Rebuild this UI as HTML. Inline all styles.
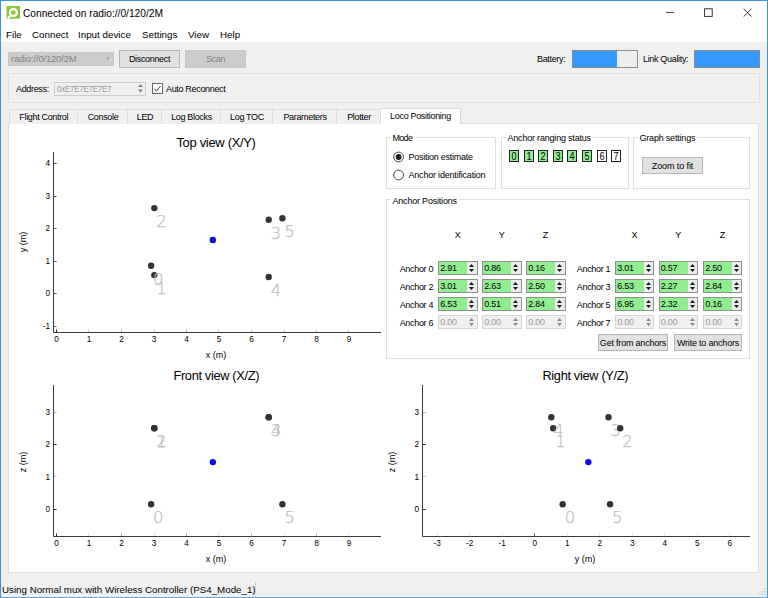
<!DOCTYPE html><html><head><meta charset="utf-8"><title>Connected on radio://0/120/2M</title><style>
*{box-sizing:border-box;margin:0;padding:0}
html,body{width:768px;height:598px;overflow:hidden;background:#f0f0f0}
body{position:relative;font-family:"Liberation Sans","DejaVu Sans",sans-serif;font-size:9px;letter-spacing:-0.33px;color:#000}
.a{position:absolute;white-space:nowrap}
.t{position:absolute;white-space:nowrap;line-height:14px;height:14px;font-size:9px;letter-spacing:-0.33px}
.seg{font-size:9.8px;letter-spacing:0;line-height:16px;height:16px}
.btn{position:absolute;border:1px solid #b6b6b6;background:#e1e1e1;text-align:center;font-size:9px;letter-spacing:-0.33px;line-height:16px;white-space:nowrap}
.dis{color:#838383}
.gb{position:absolute;border:1px solid #dfdfdf}
.gbt{position:absolute;background:#fff;padding:0 2px;line-height:14px;font-size:9px;letter-spacing:-0.2px;white-space:nowrap}
.tab{position:absolute;top:109px;height:15px;border:1px solid #dcdcdc;border-bottom:none;background:#f0f0f0;text-align:center;font-size:9px;letter-spacing:-0.33px;line-height:14px;white-space:nowrap}
.sp{position:absolute;height:14px;border:1px solid #8e8e8e;background:#ececec;font-size:9px;letter-spacing:-0.2px;line-height:13.2px;white-space:nowrap}
.sp i{position:absolute;left:0;top:0;bottom:0;width:28px;background:#90ee90;font-style:normal;padding-left:1.2px}
.sp.d{border-color:#d6d6d6;background:#f0f0f0;color:#9d9d9d}
.sp.d i{background:#f0f0f0}
.sp svg{position:absolute;left:30.2px;top:2.4px}
svg text{letter-spacing:0}
.st{position:absolute;top:150.4px;width:10px;height:11.8px;border:0.9px solid #222;background:#90ee90;font-size:10.2px;line-height:11px;text-align:center;letter-spacing:0}
.st b{display:block;font-weight:normal;transform:scaleX(0.9)}
</style></head><body>
<div class="a" style="left:0;top:0;width:768px;height:42px;background:#fff"></div>
<svg class="a" style="left:6px;top:6px" width="14" height="13" viewBox="0 0 14 13"><rect x="0.5" y="0" width="13.5" height="12.8" rx="0.8" fill="#8cc63f"/><circle cx="7.4" cy="6.5" r="3.5" fill="none" stroke="#fff" stroke-width="2.3"/><path d="M4.9 9.3 L1.9 12.3" stroke="#fff" stroke-width="2.1" stroke-linecap="butt"/></svg>
<div class="t seg" style="left:23px;top:5.7px;font-size:10.2px">Connected on radio://0/120/2M</div>
<svg class="a" style="left:640px;top:0" width="128" height="24" viewBox="0 0 128 24"><path d="M26 12.4h8" stroke="#222" stroke-width="0.9" fill="none"/><rect x="64.6" y="8.8" width="7.6" height="7.6" fill="none" stroke="#222" stroke-width="0.9"/><path d="M103.7 8.8l7.8 7.7M111.5 8.8l-7.8 7.7" stroke="#222" stroke-width="0.9" fill="none"/></svg>
<div class="t seg" style="left:6px;top:26.7px">File</div>
<div class="t seg" style="left:32px;top:26.7px">Connect</div>
<div class="t seg" style="left:78px;top:26.7px">Input device</div>
<div class="t seg" style="left:142px;top:26.7px">Settings</div>
<div class="t seg" style="left:188px;top:26.7px">View</div>
<div class="t seg" style="left:220px;top:26.7px">Help</div>
<div class="a" style="left:8px;top:51.5px;width:106px;height:14.5px;border:1px solid #c8c8c8;background:#cccccc"></div>
<div class="t dis" style="left:11px;top:52px;font-size:9.4px;letter-spacing:-0.15px">radio://0/120/2M</div>
<svg class="a" style="left:105px;top:57px" width="7" height="5" viewBox="0 0 7 5"><path d="M1.6 1.2L4.1 4.2L6.6 1.2Z" fill="#f4f4f4"/><path d="M0.8 0.4L3.4 3.4L6 0.4Z" fill="#a6a6a6"/></svg>
<div class="btn" style="left:119px;top:50px;width:61px;height:18px;line-height:16px">Disconnect</div>
<div class="btn dis" style="left:185px;top:50px;width:61px;height:18px;line-height:16px;background:#cccccc;border-color:#c8c8c8">Scan</div>
<div class="t" style="left:537px;top:52px">Battery:</div>
<div class="a" style="left:572px;top:50px;width:66px;height:18px;border:1px solid #8c8c8c;background:#eeeeee"><div style="width:44px;height:16px;background:#3399ff"></div></div>
<div class="t" style="left:643px;top:52px">Link Quality:</div>
<div class="a" style="left:694px;top:50px;width:66px;height:18px;border:1px solid #8c8c8c;background:#3399ff"></div>
<div class="gb" style="left:8px;top:73px;width:752px;height:30px;border-color:#dedede"></div>
<div class="t" style="left:16px;top:82px">Address:</div>
<div class="a" style="left:54px;top:81.5px;width:92px;height:14px;border:1px solid #cccccc;background:#f0f0f0"></div>
<div class="t" style="left:57px;top:82px;color:#9a9a9a;font-size:9.3px;letter-spacing:-0.3px;transform:scaleX(0.86);transform-origin:0 0">0xE7E7E7E7E7</div>
<svg class="a" style="left:138.2px;top:83.7px" width="5" height="9" viewBox="0 0 5 9"><path d="M0 3L2.5 0L5 3Z M0 5.6L2.5 8.6L5 5.6Z" fill="#808080"/></svg>
<div class="a" style="left:152px;top:82.5px;width:11px;height:11.5px;border:1px solid #666;background:#fff"></div>
<svg class="a" style="left:152px;top:82.5px" width="11" height="11.5" viewBox="0 0 11 11.5"><path d="M2.4 5.8L4.4 8L8.6 3" fill="none" stroke="#222" stroke-width="0.9"/></svg>
<div class="t" style="left:166px;top:82px">Auto Reconnect</div>
<div class="a" style="left:8px;top:123px;width:751px;height:450px;border:1px solid #dddddd;background:#fff"></div>
<div class="tab" style="left:8.5px;width:70.5px">Flight Control</div>
<div class="tab" style="left:77px;width:52px">Console</div>
<div class="tab" style="left:127px;width:36px">LED</div>
<div class="tab" style="left:161px;width:61px">Log Blocks</div>
<div class="tab" style="left:220px;width:54px">Log TOC</div>
<div class="tab" style="left:272px;width:66px">Parameters</div>
<div class="tab" style="left:336px;width:46px">Plotter</div>
<div class="tab" style="left:380px;width:81px;top:108px;height:16px;background:#fff;line-height:15px">Loco Positioning</div>
<div class="gb" style="left:386px;top:137px;width:110px;height:52px"></div>
<div class="gbt" style="left:390.5px;top:130.5px;letter-spacing:-0.7px">Mode</div>
<div class="gb" style="left:501px;top:137px;width:128px;height:52px"></div>
<div class="gbt" style="left:505.5px;top:130.5px;letter-spacing:-0.2px">Anchor ranging status</div>
<div class="gb" style="left:633px;top:137px;width:117px;height:52px"></div>
<div class="gbt" style="left:637.5px;top:130.5px;letter-spacing:-0.2px">Graph settings</div>
<div class="gb" style="left:386px;top:199px;width:364px;height:160px"></div>
<div class="gbt" style="left:390.5px;top:193.5px;letter-spacing:-0.2px">Anchor Positions</div>
<svg class="a" style="left:392px;top:150px" width="14" height="32" viewBox="0 0 14 32"><circle cx="6.6" cy="7" r="4.9" fill="#fff" stroke="#333" stroke-width="0.9"/><circle cx="6.6" cy="7" r="2.9" fill="#222"/><circle cx="6.6" cy="25" r="4.9" fill="#fff" stroke="#333" stroke-width="0.9"/></svg>
<div class="t" style="left:408.5px;top:150px;letter-spacing:-0.25px">Position estimate</div>
<div class="t" style="left:408.5px;top:168px;letter-spacing:-0.2px">Anchor identification</div>
<div class="st" style="left:509.0px;background:#90ee90"><b>0</b></div>
<div class="st" style="left:523.6px;background:#90ee90"><b>1</b></div>
<div class="st" style="left:538.2px;background:#90ee90"><b>2</b></div>
<div class="st" style="left:552.8px;background:#90ee90"><b>3</b></div>
<div class="st" style="left:567.4px;background:#90ee90"><b>4</b></div>
<div class="st" style="left:582.0px;background:#90ee90"><b>5</b></div>
<div class="st" style="left:596.6px;background:#fff"><b>6</b></div>
<div class="st" style="left:611.2px;background:#fff"><b>7</b></div>
<div class="btn" style="left:642px;top:157px;width:61px;height:17px;line-height:16.3px;letter-spacing:-0.1px">Zoom to fit</div>
<div class="t" style="left:447.7px;top:228px;width:20px;text-align:center">X</div>
<div class="t" style="left:491.6px;top:228px;width:20px;text-align:center">Y</div>
<div class="t" style="left:535.3px;top:228px;width:20px;text-align:center">Z</div>
<div class="t" style="left:624.3px;top:228px;width:20px;text-align:center">X</div>
<div class="t" style="left:668.0px;top:228px;width:20px;text-align:center">Y</div>
<div class="t" style="left:712.4px;top:228px;width:20px;text-align:center">Z</div>
<div class="t" style="left:399.7px;top:261.7px">Anchor 0</div>
<div class="t" style="left:576.8px;top:261.7px">Anchor 1</div>
<div class="sp" style="left:438px;top:261px;width:40px"><i>2.91</i><svg width="5" height="8" viewBox="0 0 5 8"><path d="M0 3L2.5 0L5 3Z M0 5L2.5 8L5 5Z" fill="#1a1a1a"/></svg></div>
<div class="sp" style="left:482px;top:261px;width:40px"><i>0.86</i><svg width="5" height="8" viewBox="0 0 5 8"><path d="M0 3L2.5 0L5 3Z M0 5L2.5 8L5 5Z" fill="#1a1a1a"/></svg></div>
<div class="sp" style="left:526px;top:261px;width:40px"><i>0.16</i><svg width="5" height="8" viewBox="0 0 5 8"><path d="M0 3L2.5 0L5 3Z M0 5L2.5 8L5 5Z" fill="#1a1a1a"/></svg></div>
<div class="sp" style="left:615px;top:261px;width:39px"><i>3.01</i><svg width="5" height="8" viewBox="0 0 5 8"><path d="M0 3L2.5 0L5 3Z M0 5L2.5 8L5 5Z" fill="#1a1a1a"/></svg></div>
<div class="sp" style="left:658.5px;top:261px;width:39.5px"><i>0.57</i><svg width="5" height="8" viewBox="0 0 5 8"><path d="M0 3L2.5 0L5 3Z M0 5L2.5 8L5 5Z" fill="#1a1a1a"/></svg></div>
<div class="sp" style="left:703px;top:261px;width:39px"><i>2.50</i><svg width="5" height="8" viewBox="0 0 5 8"><path d="M0 3L2.5 0L5 3Z M0 5L2.5 8L5 5Z" fill="#1a1a1a"/></svg></div>
<div class="t" style="left:399.7px;top:279.7px">Anchor 2</div>
<div class="t" style="left:576.8px;top:279.7px">Anchor 3</div>
<div class="sp" style="left:438px;top:279px;width:40px"><i>3.01</i><svg width="5" height="8" viewBox="0 0 5 8"><path d="M0 3L2.5 0L5 3Z M0 5L2.5 8L5 5Z" fill="#1a1a1a"/></svg></div>
<div class="sp" style="left:482px;top:279px;width:40px"><i>2.63</i><svg width="5" height="8" viewBox="0 0 5 8"><path d="M0 3L2.5 0L5 3Z M0 5L2.5 8L5 5Z" fill="#1a1a1a"/></svg></div>
<div class="sp" style="left:526px;top:279px;width:40px"><i>2.50</i><svg width="5" height="8" viewBox="0 0 5 8"><path d="M0 3L2.5 0L5 3Z M0 5L2.5 8L5 5Z" fill="#1a1a1a"/></svg></div>
<div class="sp" style="left:615px;top:279px;width:39px"><i>6.53</i><svg width="5" height="8" viewBox="0 0 5 8"><path d="M0 3L2.5 0L5 3Z M0 5L2.5 8L5 5Z" fill="#1a1a1a"/></svg></div>
<div class="sp" style="left:658.5px;top:279px;width:39.5px"><i>2.27</i><svg width="5" height="8" viewBox="0 0 5 8"><path d="M0 3L2.5 0L5 3Z M0 5L2.5 8L5 5Z" fill="#1a1a1a"/></svg></div>
<div class="sp" style="left:703px;top:279px;width:39px"><i>2.84</i><svg width="5" height="8" viewBox="0 0 5 8"><path d="M0 3L2.5 0L5 3Z M0 5L2.5 8L5 5Z" fill="#1a1a1a"/></svg></div>
<div class="t" style="left:399.7px;top:297.7px">Anchor 4</div>
<div class="t" style="left:576.8px;top:297.7px">Anchor 5</div>
<div class="sp" style="left:438px;top:297px;width:40px"><i>6.53</i><svg width="5" height="8" viewBox="0 0 5 8"><path d="M0 3L2.5 0L5 3Z M0 5L2.5 8L5 5Z" fill="#1a1a1a"/></svg></div>
<div class="sp" style="left:482px;top:297px;width:40px"><i>0.51</i><svg width="5" height="8" viewBox="0 0 5 8"><path d="M0 3L2.5 0L5 3Z M0 5L2.5 8L5 5Z" fill="#1a1a1a"/></svg></div>
<div class="sp" style="left:526px;top:297px;width:40px"><i>2.84</i><svg width="5" height="8" viewBox="0 0 5 8"><path d="M0 3L2.5 0L5 3Z M0 5L2.5 8L5 5Z" fill="#1a1a1a"/></svg></div>
<div class="sp" style="left:615px;top:297px;width:39px"><i>6.95</i><svg width="5" height="8" viewBox="0 0 5 8"><path d="M0 3L2.5 0L5 3Z M0 5L2.5 8L5 5Z" fill="#1a1a1a"/></svg></div>
<div class="sp" style="left:658.5px;top:297px;width:39.5px"><i>2.32</i><svg width="5" height="8" viewBox="0 0 5 8"><path d="M0 3L2.5 0L5 3Z M0 5L2.5 8L5 5Z" fill="#1a1a1a"/></svg></div>
<div class="sp" style="left:703px;top:297px;width:39px"><i>0.16</i><svg width="5" height="8" viewBox="0 0 5 8"><path d="M0 3L2.5 0L5 3Z M0 5L2.5 8L5 5Z" fill="#1a1a1a"/></svg></div>
<div class="t" style="left:399.7px;top:315.7px">Anchor 6</div>
<div class="t" style="left:576.8px;top:315.7px">Anchor 7</div>
<div class="sp d" style="left:438px;top:315px;width:40px"><i>0.00</i><svg width="5" height="8" viewBox="0 0 5 8"><path d="M0 3L2.5 0L5 3Z M0 5L2.5 8L5 5Z" fill="#8c8c8c"/></svg></div>
<div class="sp d" style="left:482px;top:315px;width:40px"><i>0.00</i><svg width="5" height="8" viewBox="0 0 5 8"><path d="M0 3L2.5 0L5 3Z M0 5L2.5 8L5 5Z" fill="#8c8c8c"/></svg></div>
<div class="sp d" style="left:526px;top:315px;width:40px"><i>0.00</i><svg width="5" height="8" viewBox="0 0 5 8"><path d="M0 3L2.5 0L5 3Z M0 5L2.5 8L5 5Z" fill="#8c8c8c"/></svg></div>
<div class="sp d" style="left:615px;top:315px;width:39px"><i>0.00</i><svg width="5" height="8" viewBox="0 0 5 8"><path d="M0 3L2.5 0L5 3Z M0 5L2.5 8L5 5Z" fill="#8c8c8c"/></svg></div>
<div class="sp d" style="left:658.5px;top:315px;width:39.5px"><i>0.00</i><svg width="5" height="8" viewBox="0 0 5 8"><path d="M0 3L2.5 0L5 3Z M0 5L2.5 8L5 5Z" fill="#8c8c8c"/></svg></div>
<div class="sp d" style="left:703px;top:315px;width:39px"><i>0.00</i><svg width="5" height="8" viewBox="0 0 5 8"><path d="M0 3L2.5 0L5 3Z M0 5L2.5 8L5 5Z" fill="#8c8c8c"/></svg></div>
<div class="btn" style="left:598px;top:334px;width:70px;height:17px;line-height:16.3px;letter-spacing:-0.2px">Get from anchors</div>
<div class="btn" style="left:674px;top:334px;width:68px;height:17px;line-height:16.3px;letter-spacing:-0.2px">Write to anchors</div>
<div class="t" style="left:136px;top:134px;width:160px;text-align:center;font-size:13px;line-height:18px;height:18px">Top view (X/Y)</div>
<svg class="a" style="left:0;top:0" width="768" height="598" viewBox="0 0 768 598"><path d="M53.5 152V332.5H381" fill="none" stroke="#262626" stroke-width="0.9"/><path d="M56.5 332v-2.6" stroke="#111" stroke-width="1" opacity="0.9"/><path d="M88.5 332v-2.6" stroke="#111" stroke-width="1" opacity="0.2"/><path d="M121.5 332v-2.6" stroke="#111" stroke-width="1" opacity="0.3"/><path d="M154.5 332v-2.6" stroke="#111" stroke-width="1" opacity="0.2"/><path d="M186.5 332v-2.6" stroke="#111" stroke-width="1" opacity="0.3"/><path d="M218.5 332v-2.6" stroke="#111" stroke-width="1" opacity="0.2"/><path d="M251.5 332v-2.6" stroke="#111" stroke-width="1" opacity="0.25"/><path d="M284.5 332v-2.6" stroke="#111" stroke-width="1" opacity="0.2"/><path d="M316.5 332v-2.6" stroke="#111" stroke-width="1" opacity="0.25"/><path d="M348.5 332v-2.6" stroke="#111" stroke-width="1" opacity="0.2"/><path d="M54 326.5h2.6" stroke="#111" stroke-width="1" opacity="0.6"/><path d="M54 293.5h2.6" stroke="#111" stroke-width="1" opacity="0.75"/><path d="M54 261.5h2.6" stroke="#111" stroke-width="1" opacity="0.7"/><path d="M54 228.5h2.6" stroke="#111" stroke-width="1" opacity="0.7"/><path d="M54 196.5h2.6" stroke="#111" stroke-width="1" opacity="0.7"/><path d="M54 163.5h2.6" stroke="#111" stroke-width="1" opacity="0.75"/><text x="56.5" y="341.9" font-size="8.2" text-anchor="middle" font-family="Liberation Sans,sans-serif">0</text><text x="89.0" y="341.9" font-size="8.2" text-anchor="middle" font-family="Liberation Sans,sans-serif">1</text><text x="121.5" y="341.9" font-size="8.2" text-anchor="middle" font-family="Liberation Sans,sans-serif">2</text><text x="154.0" y="341.9" font-size="8.2" text-anchor="middle" font-family="Liberation Sans,sans-serif">3</text><text x="186.5" y="341.9" font-size="8.2" text-anchor="middle" font-family="Liberation Sans,sans-serif">4</text><text x="219.0" y="341.9" font-size="8.2" text-anchor="middle" font-family="Liberation Sans,sans-serif">5</text><text x="251.5" y="341.9" font-size="8.2" text-anchor="middle" font-family="Liberation Sans,sans-serif">6</text><text x="284.0" y="341.9" font-size="8.2" text-anchor="middle" font-family="Liberation Sans,sans-serif">7</text><text x="316.5" y="341.9" font-size="8.2" text-anchor="middle" font-family="Liberation Sans,sans-serif">8</text><text x="349.0" y="341.9" font-size="8.2" text-anchor="middle" font-family="Liberation Sans,sans-serif">9</text><text x="50" y="328.9" font-size="8.2" text-anchor="end" font-family="Liberation Sans,sans-serif">-1</text><text x="50" y="296.4" font-size="8.2" text-anchor="end" font-family="Liberation Sans,sans-serif">0</text><text x="50" y="263.9" font-size="8.2" text-anchor="end" font-family="Liberation Sans,sans-serif">1</text><text x="50" y="231.4" font-size="8.2" text-anchor="end" font-family="Liberation Sans,sans-serif">2</text><text x="50" y="198.9" font-size="8.2" text-anchor="end" font-family="Liberation Sans,sans-serif">3</text><text x="50" y="166.4" font-size="8.2" text-anchor="end" font-family="Liberation Sans,sans-serif">4</text><text x="216" y="357.8" font-size="9.1" text-anchor="middle" font-family="Liberation Sans,sans-serif">x (m)</text><text transform="translate(26,242) rotate(-90)" font-size="9.1" text-anchor="middle" font-family="Liberation Sans,sans-serif">y (m)</text><circle cx="151.1" cy="265.7" r="3.2" fill="#333"/><circle cx="154.3" cy="275.1" r="3.2" fill="#333"/><circle cx="154.3" cy="208.1" r="3.2" fill="#333"/><circle cx="268.7" cy="219.8" r="3.2" fill="#333"/><circle cx="268.7" cy="277.0" r="3.2" fill="#333"/><circle cx="282.4" cy="218.2" r="3.2" fill="#333"/><circle cx="212.8" cy="240.0" r="3.2" fill="#0808f4"/><text x="153.1" y="284.8" font-size="16.4" fill="#c0c0c0" stroke="#c0c0c0" stroke-width="0.25" font-family="DejaVu Sans,Liberation Sans,sans-serif" font-weight="200">0</text><text x="156.3" y="294.2" font-size="16.4" fill="#c0c0c0" stroke="#c0c0c0" stroke-width="0.25" font-family="DejaVu Sans,Liberation Sans,sans-serif" font-weight="200">1</text><text x="156.3" y="227.2" font-size="16.4" fill="#c0c0c0" stroke="#c0c0c0" stroke-width="0.25" font-family="DejaVu Sans,Liberation Sans,sans-serif" font-weight="200">2</text><text x="270.7" y="238.9" font-size="16.4" fill="#c0c0c0" stroke="#c0c0c0" stroke-width="0.25" font-family="DejaVu Sans,Liberation Sans,sans-serif" font-weight="200">3</text><text x="270.7" y="296.1" font-size="16.4" fill="#c0c0c0" stroke="#c0c0c0" stroke-width="0.25" font-family="DejaVu Sans,Liberation Sans,sans-serif" font-weight="200">4</text><text x="284.4" y="237.3" font-size="16.4" fill="#c0c0c0" stroke="#c0c0c0" stroke-width="0.25" font-family="DejaVu Sans,Liberation Sans,sans-serif" font-weight="200">5</text></svg>
<div class="t" style="left:136.3px;top:366.8px;width:160px;text-align:center;font-size:12.8px;line-height:18px;height:18px">Front view (X/Z)</div>
<svg class="a" style="left:0;top:0" width="768" height="598" viewBox="0 0 768 598"><path d="M53.5 385V536.5H381" fill="none" stroke="#262626" stroke-width="0.9"/><path d="M56.5 536v-2.6" stroke="#111" stroke-width="1" opacity="0.9"/><path d="M88.5 536v-2.6" stroke="#111" stroke-width="1" opacity="0.15"/><path d="M121.5 536v-2.6" stroke="#111" stroke-width="1" opacity="0.35"/><path d="M154.5 536v-2.6" stroke="#111" stroke-width="1" opacity="0.15"/><path d="M186.5 536v-2.6" stroke="#111" stroke-width="1" opacity="0.35"/><path d="M218.5 536v-2.6" stroke="#111" stroke-width="1" opacity="0.15"/><path d="M251.5 536v-2.6" stroke="#111" stroke-width="1" opacity="0.3"/><path d="M284.5 536v-2.6" stroke="#111" stroke-width="1" opacity="0.15"/><path d="M316.5 536v-2.6" stroke="#111" stroke-width="1" opacity="0.3"/><path d="M348.5 536v-2.6" stroke="#111" stroke-width="1" opacity="0.15"/><path d="M54 509.5h2.6" stroke="#111" stroke-width="1" opacity="0.9"/><path d="M54 476.5h2.6" stroke="#111" stroke-width="1" opacity="0.25"/><path d="M54 444.5h2.6" stroke="#111" stroke-width="1" opacity="0.9"/><path d="M54 412.5h2.6" stroke="#111" stroke-width="1" opacity="0.3"/><text x="56.5" y="545.9" font-size="8.2" text-anchor="middle" font-family="Liberation Sans,sans-serif">0</text><text x="89.0" y="545.9" font-size="8.2" text-anchor="middle" font-family="Liberation Sans,sans-serif">1</text><text x="121.5" y="545.9" font-size="8.2" text-anchor="middle" font-family="Liberation Sans,sans-serif">2</text><text x="154.0" y="545.9" font-size="8.2" text-anchor="middle" font-family="Liberation Sans,sans-serif">3</text><text x="186.5" y="545.9" font-size="8.2" text-anchor="middle" font-family="Liberation Sans,sans-serif">4</text><text x="219.0" y="545.9" font-size="8.2" text-anchor="middle" font-family="Liberation Sans,sans-serif">5</text><text x="251.5" y="545.9" font-size="8.2" text-anchor="middle" font-family="Liberation Sans,sans-serif">6</text><text x="284.0" y="545.9" font-size="8.2" text-anchor="middle" font-family="Liberation Sans,sans-serif">7</text><text x="316.5" y="545.9" font-size="8.2" text-anchor="middle" font-family="Liberation Sans,sans-serif">8</text><text x="349.0" y="545.9" font-size="8.2" text-anchor="middle" font-family="Liberation Sans,sans-serif">9</text><text x="50" y="512.3" font-size="8.2" text-anchor="end" font-family="Liberation Sans,sans-serif">0</text><text x="50" y="479.8" font-size="8.2" text-anchor="end" font-family="Liberation Sans,sans-serif">1</text><text x="50" y="447.3" font-size="8.2" text-anchor="end" font-family="Liberation Sans,sans-serif">2</text><text x="50" y="414.8" font-size="8.2" text-anchor="end" font-family="Liberation Sans,sans-serif">3</text><text x="216" y="561.8" font-size="9.1" text-anchor="middle" font-family="Liberation Sans,sans-serif">x (m)</text><text transform="translate(26,462) rotate(-90)" font-size="9.1" text-anchor="middle" font-family="Liberation Sans,sans-serif">z (m)</text><circle cx="151.1" cy="504.3" r="3.2" fill="#333"/><circle cx="154.3" cy="428.2" r="3.2" fill="#333"/><circle cx="154.3" cy="428.2" r="3.2" fill="#333"/><circle cx="268.7" cy="417.2" r="3.2" fill="#333"/><circle cx="268.7" cy="417.2" r="3.2" fill="#333"/><circle cx="282.4" cy="504.3" r="3.2" fill="#333"/><circle cx="212.8" cy="462.1" r="3.2" fill="#0808f4"/><text x="153.1" y="523.4" font-size="16.4" fill="#c0c0c0" stroke="#c0c0c0" stroke-width="0.25" font-family="DejaVu Sans,Liberation Sans,sans-serif" font-weight="200">0</text><text x="156.3" y="447.4" font-size="16.4" fill="#c0c0c0" stroke="#c0c0c0" stroke-width="0.25" font-family="DejaVu Sans,Liberation Sans,sans-serif" font-weight="200">1</text><text x="156.3" y="447.4" font-size="16.4" fill="#c0c0c0" stroke="#c0c0c0" stroke-width="0.25" font-family="DejaVu Sans,Liberation Sans,sans-serif" font-weight="200">2</text><text x="270.7" y="436.3" font-size="16.4" fill="#c0c0c0" stroke="#c0c0c0" stroke-width="0.25" font-family="DejaVu Sans,Liberation Sans,sans-serif" font-weight="200">3</text><text x="270.7" y="436.3" font-size="16.4" fill="#c0c0c0" stroke="#c0c0c0" stroke-width="0.25" font-family="DejaVu Sans,Liberation Sans,sans-serif" font-weight="200">4</text><text x="284.4" y="523.4" font-size="16.4" fill="#c0c0c0" stroke="#c0c0c0" stroke-width="0.25" font-family="DejaVu Sans,Liberation Sans,sans-serif" font-weight="200">5</text></svg>
<div class="t" style="left:505.29999999999995px;top:366.8px;width:160px;text-align:center;font-size:12.8px;line-height:18px;height:18px">Right view (Y/Z)</div>
<svg class="a" style="left:0;top:0" width="768" height="598" viewBox="0 0 768 598"><path d="M422.5 385V536.5H750" fill="none" stroke="#262626" stroke-width="0.9"/><path d="M437.5 536v-2.6" stroke="#111" stroke-width="1" opacity="0.12"/><path d="M469.5 536v-2.6" stroke="#111" stroke-width="1" opacity="0.12"/><path d="M502.5 536v-2.6" stroke="#111" stroke-width="1" opacity="0.12"/><path d="M534.5 536v-2.6" stroke="#111" stroke-width="1" opacity="0.7"/><path d="M567.5 536v-2.6" stroke="#111" stroke-width="1" opacity="0.12"/><path d="M599.5 536v-2.6" stroke="#111" stroke-width="1" opacity="0.12"/><path d="M632.5 536v-2.6" stroke="#111" stroke-width="1" opacity="0.12"/><path d="M664.5 536v-2.6" stroke="#111" stroke-width="1" opacity="0.12"/><path d="M697.5 536v-2.6" stroke="#111" stroke-width="1" opacity="0.12"/><path d="M729.5 536v-2.6" stroke="#111" stroke-width="1" opacity="0.12"/><path d="M423 509.5h2.6" stroke="#111" stroke-width="1" opacity="0.9"/><path d="M423 476.5h2.6" stroke="#111" stroke-width="1" opacity="0.25"/><path d="M423 444.5h2.6" stroke="#111" stroke-width="1" opacity="0.9"/><path d="M423 412.5h2.6" stroke="#111" stroke-width="1" opacity="0.3"/><text x="437.2" y="545.9" font-size="8.2" text-anchor="middle" font-family="Liberation Sans,sans-serif">-3</text><text x="469.7" y="545.9" font-size="8.2" text-anchor="middle" font-family="Liberation Sans,sans-serif">-2</text><text x="502.2" y="545.9" font-size="8.2" text-anchor="middle" font-family="Liberation Sans,sans-serif">-1</text><text x="534.7" y="545.9" font-size="8.2" text-anchor="middle" font-family="Liberation Sans,sans-serif">0</text><text x="567.2" y="545.9" font-size="8.2" text-anchor="middle" font-family="Liberation Sans,sans-serif">1</text><text x="599.7" y="545.9" font-size="8.2" text-anchor="middle" font-family="Liberation Sans,sans-serif">2</text><text x="632.2" y="545.9" font-size="8.2" text-anchor="middle" font-family="Liberation Sans,sans-serif">3</text><text x="664.7" y="545.9" font-size="8.2" text-anchor="middle" font-family="Liberation Sans,sans-serif">4</text><text x="697.2" y="545.9" font-size="8.2" text-anchor="middle" font-family="Liberation Sans,sans-serif">5</text><text x="729.7" y="545.9" font-size="8.2" text-anchor="middle" font-family="Liberation Sans,sans-serif">6</text><text x="419" y="512.3" font-size="8.2" text-anchor="end" font-family="Liberation Sans,sans-serif">0</text><text x="419" y="479.8" font-size="8.2" text-anchor="end" font-family="Liberation Sans,sans-serif">1</text><text x="419" y="447.3" font-size="8.2" text-anchor="end" font-family="Liberation Sans,sans-serif">2</text><text x="419" y="414.8" font-size="8.2" text-anchor="end" font-family="Liberation Sans,sans-serif">3</text><text x="585" y="561.8" font-size="9.1" text-anchor="middle" font-family="Liberation Sans,sans-serif">y (m)</text><text transform="translate(395,462) rotate(-90)" font-size="9.1" text-anchor="middle" font-family="Liberation Sans,sans-serif">z (m)</text><text x="610.5" y="436.3" font-size="16.4" fill="#c0c0c0" stroke="#c0c0c0" stroke-width="0.25" font-family="DejaVu Sans,Liberation Sans,sans-serif" font-weight="200">3</text><circle cx="562.7" cy="504.3" r="3.2" fill="#333"/><circle cx="553.2" cy="428.2" r="3.2" fill="#333"/><circle cx="620.2" cy="428.2" r="3.2" fill="#333"/><circle cx="608.5" cy="417.2" r="3.2" fill="#333"/><circle cx="551.3" cy="417.2" r="3.2" fill="#333"/><circle cx="610.1" cy="504.3" r="3.2" fill="#333"/><circle cx="588.3" cy="462.1" r="3.2" fill="#0808f4"/><text x="564.7" y="523.4" font-size="16.4" fill="#c0c0c0" stroke="#c0c0c0" stroke-width="0.25" font-family="DejaVu Sans,Liberation Sans,sans-serif" font-weight="200">0</text><text x="555.2" y="447.4" font-size="16.4" fill="#c0c0c0" stroke="#c0c0c0" stroke-width="0.25" font-family="DejaVu Sans,Liberation Sans,sans-serif" font-weight="200">1</text><text x="622.2" y="447.4" font-size="16.4" fill="#c0c0c0" stroke="#c0c0c0" stroke-width="0.25" font-family="DejaVu Sans,Liberation Sans,sans-serif" font-weight="200">2</text><text x="553.3" y="436.3" font-size="16.4" fill="#c0c0c0" stroke="#c0c0c0" stroke-width="0.25" font-family="DejaVu Sans,Liberation Sans,sans-serif" font-weight="200">4</text><text x="612.1" y="523.4" font-size="16.4" fill="#c0c0c0" stroke="#c0c0c0" stroke-width="0.25" font-family="DejaVu Sans,Liberation Sans,sans-serif" font-weight="200">5</text></svg>
<div class="t seg" style="left:2px;top:582px;font-size:9.75px">Using Normal mux with Wireless Controller (PS4_Mode_1)</div>
<div class="a" style="left:255px;top:582px;width:1px;height:15px;background:#d0d0d0"></div>
<svg class="a" style="left:758px;top:588px" width="9" height="9" viewBox="0 0 9 9"><g fill="#bdbdbd"><rect x="6" y="0.5" width="1.3" height="1.3"/><rect x="3.6" y="3" width="1.3" height="1.3"/><rect x="6" y="3" width="1.3" height="1.3"/><rect x="1.2" y="5.5" width="1.3" height="1.3"/><rect x="3.6" y="5.5" width="1.3" height="1.3"/><rect x="6" y="5.5" width="1.3" height="1.3"/></g></svg>
<div class="a" style="left:0;top:0;width:768px;height:598px;border:1px solid #3a93dc;border-bottom-color:#5ea8e4;pointer-events:none"></div>
</body></html>
